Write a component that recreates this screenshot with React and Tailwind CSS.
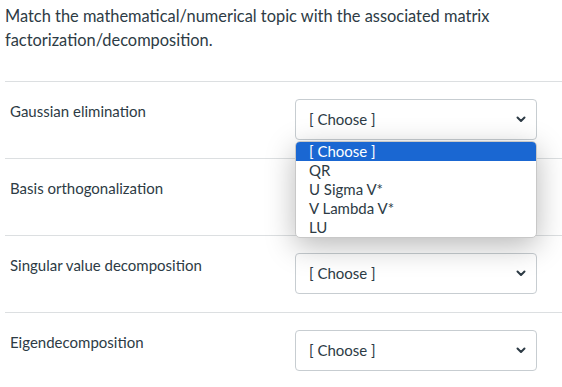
import React from 'react';

const rows = [
  { label: 'Gaussian elimination', open: true },
  { label: 'Basis orthogonalization' },
  { label: 'Singular value decomposition' },
  { label: 'Eigendecomposition' },
]

const options = ['[ Choose ]', 'QR', 'U Sigma V*', 'V Lambda V*', 'LU']

const Chevron = () => (
  <svg width="10" height="7" viewBox="0 0 10 7" className="shrink-0">
    <path d="M1.5 1.5 L5 5 L8.5 1.5" fill="none" stroke="#2d3b45" strokeWidth="2" strokeLinecap="round" strokeLinejoin="round" />
  </svg>
)

function Select({ open }) {
  return (
    <div className="relative">
      <div className="w-[242px] h-[41px] rounded border border-[#c7cdd1] bg-white flex items-center justify-between pl-[13px] pr-[10px]">
        <span className="text-[15px] text-[#2d3b45]">[ Choose ]</span>
        <Chevron />
      </div>
      {open && (
        <div className="absolute left-0 top-[42px] w-[242px] z-10 rounded-[5px] overflow-hidden bg-white border border-[#c8c8c8] shadow-[0_8px_30px_rgba(0,0,0,0.28)]">
          {options.map((o, i) => (
            <div
              key={i}
              className={
                'h-[19px] leading-[19px] pl-[13px] text-[15px] ' +
                (i === 0 ? 'bg-[#1a67d2] text-white' : 'text-[#2d3b45]')
              }
            >
              {o}
            </div>
          ))}
        </div>
      )}
    </div>
  )
}

export default function App() {
  return (
    <div className="w-[562px] h-[387px] bg-white overflow-hidden font-['Lato',sans-serif] text-[#2d3b45]">
      <div className="pl-[5px] pt-[4px] pr-2 text-[16.4px] leading-[24px] h-[81px]">
        Match the mathematical/numerical topic with the associated matrix factorization/decomposition.
      </div>
      <div className="ml-[5px]">
        {rows.map((r, i) => (
          <div key={i} className="h-[77px] border-t border-[#dcdfe1] flex justify-between">
            <div className="pl-[5px] pt-[19px] text-[15px] leading-[20px]">{r.label}</div>
            <div className="pt-[17px] pr-[25px]">
              <Select open={r.open} />
            </div>
          </div>
        ))}
      </div>
    </div>
  )
}
